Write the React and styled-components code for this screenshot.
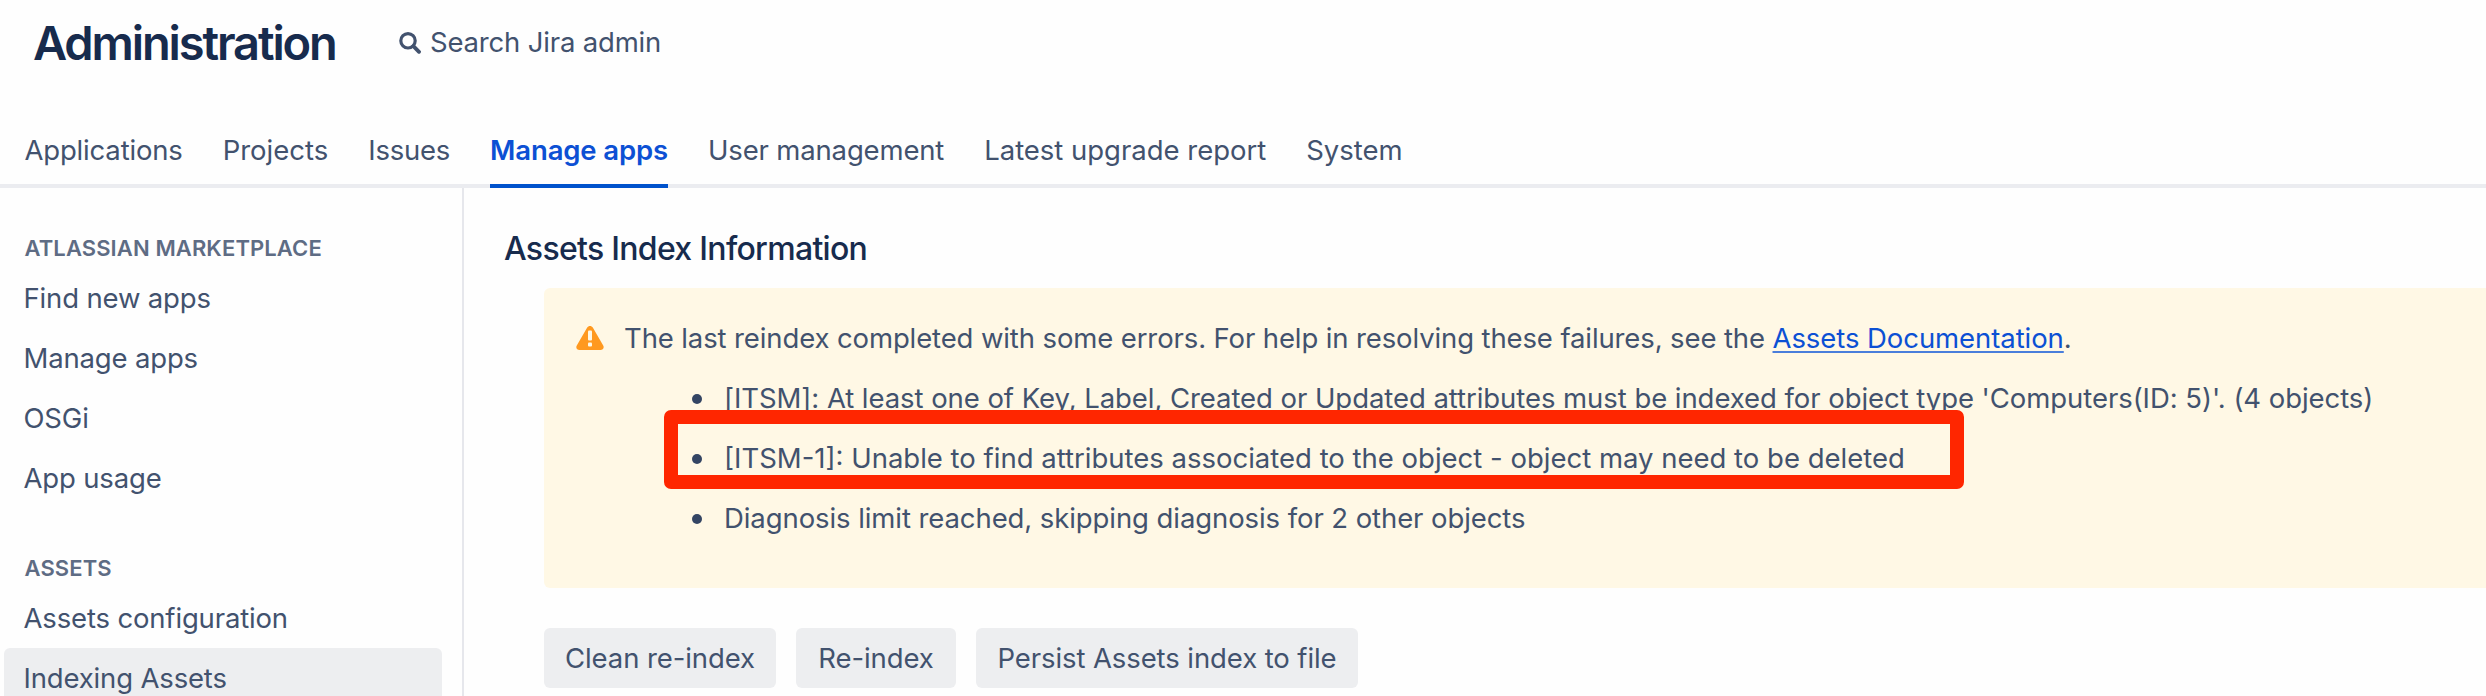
import React from 'react';
import styled, { createGlobalStyle } from 'styled-components';

// Global style for body
const GlobalStyle = createGlobalStyle`
  * {
    box-sizing: border-box;
  }

  body {
    margin: 0;
    overflow: hidden;
    font-family: Inter, 'Liberation Sans', sans-serif;
    font-size: 27.5px;
    line-height: 40px;
    color: #42526e;
    background: #fefefe;
  }
`;

const Page = styled.div`
  display: flex;
  flex-direction: column;
  height: 696px;
  overflow: hidden;
`;

const Header = styled.header`
  display: flex;
  align-items: center;
  height: 86px;
  padding-left: 33px;
`;

const Title = styled.h1`
  width: 365px;
  margin: 0;
  font-size: 47px;
  font-weight: 600;
  letter-spacing: -2.12px;
  color: #172b4d;
`;

const Search = styled.div`
  display: flex;
  align-items: center;
  gap: 9px;
  height: 40px;
  margin-bottom: 2px;
  letter-spacing: -0.18px;
`;

const Nav = styled.nav`
  display: flex;
  gap: 40px;
  height: 102px;
  padding-left: 24.5px;
  border-bottom: 4px solid #ebecf0;
`;

const NavItem = styled.a`
  height: 102px;
  padding-top: 44px;
  white-space: nowrap;
  letter-spacing: ${(props) => props.$spacing || 0}px;
  font-weight: ${(props) => (props.$active ? 600 : 400)};
  color: ${(props) => (props.$active ? '#0c50d4' : 'inherit')};
  border-bottom: 4px solid ${(props) => (props.$active ? '#0052cc' : 'transparent')};
`;

const Body = styled.div`
  display: flex;
  height: 508px;
`;

const Sidebar = styled.aside`
  flex: none;
  width: 464px;
  padding: 40px 20px 0 4px;
  border-right: 2px solid #e6e7ec;
`;

const Group = styled.section`
  margin-bottom: 40px;
`;

const GroupTitle = styled.h3`
  margin: 0;
  padding-left: 20.5px;
  font-size: 22px;
  font-weight: 600;
  line-height: 40px;
  letter-spacing: 0.11px;
  color: #5e6c84;
`;

const SideItem = styled.a`
  display: block;
  height: 60px;
  padding-left: 19.5px;
  line-height: 60px;
  letter-spacing: -0.16px;
  border-radius: 6px;
  background: ${(props) => (props.$selected ? '#edeef0' : 'transparent')};
`;

const Main = styled.main`
  flex: 1;
  min-width: 0;
  padding: 41px 0 0 40px;
`;

const Heading = styled.h2`
  margin: 0;
  font-size: 32px;
  font-weight: 500;
  line-height: 40px;
  letter-spacing: -0.7px;
  color: #172b4d;
`;

const Alert = styled.div`
  height: 300px;
  margin: 19px 0 40px 40px;
  padding: 30px 0 0 31px;
  border-radius: 6px 0 0 6px;
  background: #fff8e5;
`;

const AlertMessage = styled.div`
  display: flex;
  align-items: center;
  height: 40px;
  white-space: pre;
  letter-spacing: -0.118px;
`;

const WarningIcon = styled.svg`
  flex: none;
  margin-right: 19px;
`;

const DocLink = styled.a`
  letter-spacing: -0.07px;
  color: #0c50d4;
  text-decoration: underline;
  text-decoration-color: #4a7edb;
  text-decoration-thickness: 2px;
  text-underline-offset: 3px;
`;

const ErrorList = styled.ul`
  display: flex;
  flex-direction: column;
  gap: 20px;
  margin: 20px 0 0;
  padding: 0 0 0 117px;
  list-style: none;
`;

const ErrorItem = styled.li`
  position: relative;
  display: flex;
  align-items: center;
  height: 40px;
  white-space: nowrap;
  letter-spacing: ${(props) => props.$spacing}px;

  &::before {
    content: '';
    width: 10px;
    height: 10px;
    margin: 2px 22px 0 0;
    border-radius: 50%;
    background: #344563;
  }
`;

// Red frame drawn over the list
const Highlight = styled.span`
  position: absolute;
  top: -28px;
  left: -28px;
  width: 1300px;
  height: 79px;
  border: 14px solid #ff2600;
  border-radius: 7px;
`;

const Buttons = styled.div`
  display: flex;
  gap: 20px;
  margin-left: 40px;
`;

const Button = styled.button`
  width: ${(props) => props.$width}px;
  height: 60px;
  padding: 0;
  border: 0;
  border-radius: 6px;
  font: inherit;
  letter-spacing: -0.09px;
  color: inherit;
  background: #edeef0;
`;

const navItems = [
  { label: 'Applications', spacing: -0.18 },
  { label: 'Projects' },
  { label: 'Issues', spacing: -0.24 },
  { label: 'Manage apps', spacing: -0.13, active: true },
  { label: 'User management', spacing: -0.16 },
  { label: 'Latest upgrade report', spacing: -0.02 },
  { label: 'System' },
];

const groups = [
  { title: 'ATLASSIAN MARKETPLACE', items: ['Find new apps', 'Manage apps', 'OSGi', 'App usage'] },
  { title: 'ASSETS', items: ['Assets configuration', 'Indexing Assets'] },
];

const App = () => {
  return (
    <>
      <GlobalStyle />
      <Page>
        <Header>
          <Title>Administration</Title>
          <Search>
            <svg width="23" height="23" viewBox="0 0 23 23" fill="none" stroke="#42526e">
              <circle cx="10" cy="9.8" r="7.2" strokeWidth="3.2" />
              <path d="M15.4 15.2L21 20.8" strokeWidth="3.8" strokeLinecap="round" />
            </svg>
            Search Jira admin
          </Search>
        </Header>
        <Nav>
          {navItems.map((item) => (
            <NavItem key={item.label} $active={item.active} $spacing={item.spacing}>
              {item.label}
            </NavItem>
          ))}
        </Nav>
        <Body>
          <Sidebar>
            {groups.map((group) => (
              <Group key={group.title}>
                <GroupTitle>{group.title}</GroupTitle>
                {group.items.map((item) => (
                  <SideItem key={item} $selected={item === 'Indexing Assets'}>
                    {item}
                  </SideItem>
                ))}
              </Group>
            ))}
          </Sidebar>
          <Main>
            <Heading>Assets Index Information</Heading>
            <Alert>
              <AlertMessage>
                <WarningIcon width="30" height="26" viewBox="0 0 30 26">
                  <path
                    d="M12.2 2.6C13.4 0.5 16.6 0.5 17.8 2.6L28.2 20.6C29.4 22.8 28.2 25 25.8 25H4.2C1.8 25 0.6 22.8 1.8 20.6Z"
                    fill="#ff991f"
                  />
                  <rect x="13" y="5.6" width="4" height="9.8" rx="1" fill="#fff8e5" />
                  <rect x="13" y="17.4" width="4" height="4" rx="1" fill="#fff8e5" />
                </WarningIcon>
                <span>
                  The last reindex completed with some errors. For help in resolving these failures, see the{' '}
                  <DocLink>Assets Documentation</DocLink>.
                </span>
              </AlertMessage>
              <ErrorList>
                <ErrorItem $spacing={-0.058}>
                  [ITSM]: At least one of Key, Label, Created or Updated attributes must be indexed for object type
                  'Computers(ID: 5)'. (4 objects)
                </ErrorItem>
                <ErrorItem $spacing={0}>
                  [ITSM-1]: Unable to find attributes associated to the object - object may need to be deleted
                  <Highlight />
                </ErrorItem>
                <ErrorItem $spacing={-0.083}>Diagnosis limit reached, skipping diagnosis for 2 other objects</ErrorItem>
              </ErrorList>
            </Alert>
            <Buttons>
              <Button $width={232}>Clean re-index</Button>
              <Button $width={160}>Re-index</Button>
              <Button $width={382}>Persist Assets index to file</Button>
            </Buttons>
          </Main>
        </Body>
      </Page>
    </>
  );
};

export default App;
